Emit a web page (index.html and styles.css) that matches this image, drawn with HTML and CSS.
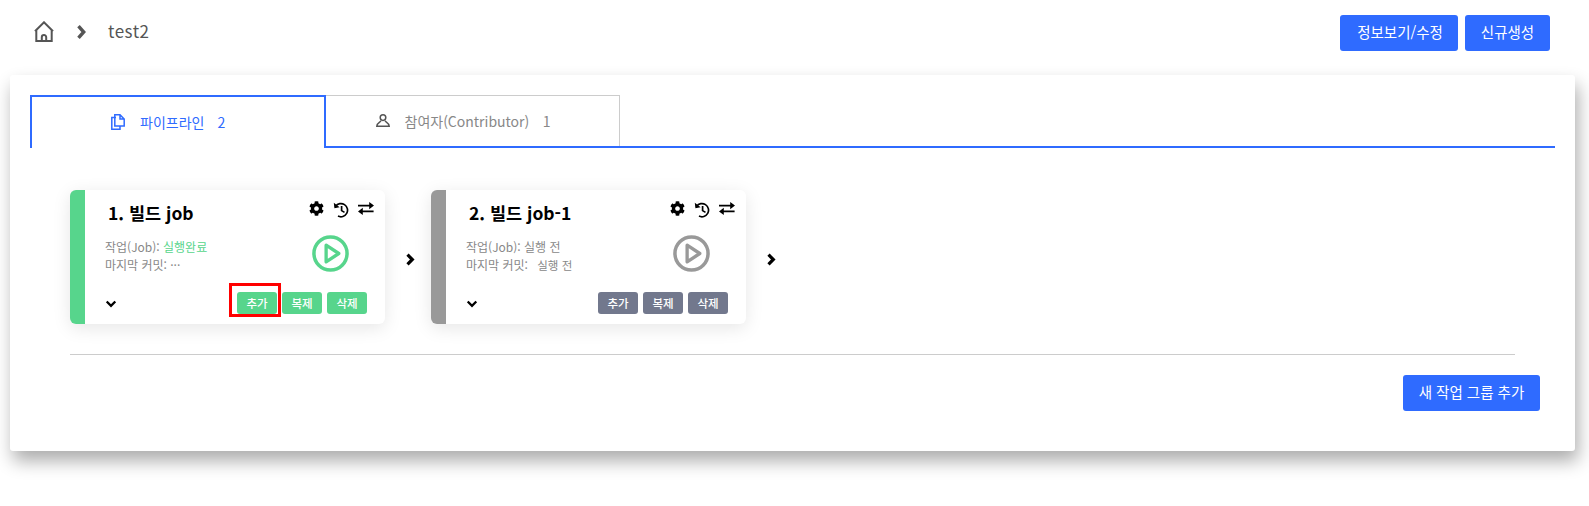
FILE: index.html
```html
<!DOCTYPE html>
<html lang="ko">
<head>
<meta charset="utf-8">
<title>test2</title>
<link rel="stylesheet" href="styles.css">
</head>
<body>
<svg class="defs" width="0" height="0">
  <symbol id="cog" viewBox="0 0 512 512"><path d="M487.4 315.7l-42.6-24.6c4.3-23.2 4.3-47 0-70.2l42.6-24.6c4.9-2.8 7.1-8.6 5.5-14-11.1-35.6-30-67.8-54.7-94.6-3.8-4.1-10-5.1-14.8-2.3L380.8 110c-17.9-15.4-38.5-27.3-60.8-35.1V25.8c0-5.6-3.9-10.5-9.4-11.7-36.7-8.2-74.3-7.8-109.2 0-5.5 1.2-9.4 6.1-9.4 11.7V75c-22.2 7.9-42.8 19.8-60.8 35.1L88.7 85.5c-4.9-2.8-11-1.9-14.8 2.3-24.7 26.7-43.6 58.9-54.7 94.6-1.7 5.4.6 11.2 5.5 14L67.3 221c-4.3 23.2-4.3 47 0 70.2l-42.6 24.6c-4.9 2.8-7.1 8.6-5.5 14 11.1 35.6 30 67.8 54.7 94.6 3.8 4.1 10 5.1 14.8 2.3l42.6-24.6c17.9 15.4 38.5 27.3 60.8 35.1v49.2c0 5.6 3.9 10.5 9.4 11.7 36.7 8.2 74.3 7.8 109.2 0 5.500-1.200 9.400-6.100 9.400-11.700v-49.200c22.200-7.900 42.800-19.800 60.800-35.100l42.600 24.600c4.900 2.800 11 1.900 14.800-2.300 24.700-26.700 43.600-58.900 54.700-94.600 1.500-5.500-.7-11.300-5.600-14.100zM256 336c-44.100 0-80-35.900-80-80s35.900-80 80-80 80 35.900 80 80-35.900 80-80 80z"/></symbol>
  <symbol id="history" viewBox="0 0 16 16"><path d="M0.800 0.800l0.600 5.400 5.200-0.900z" fill="currentColor"/><path d="M2.600 4.300A6.600 6.600 0 1 1 5 14.100" fill="none" stroke="currentColor" stroke-width="1.700"/><path d="M8.600 4v4.600l2.900 1.800" fill="none" stroke="currentColor" stroke-width="1.700"/></symbol>
  <symbol id="swap" viewBox="0 0 16 13"><path d="M0 3.600h12.500M15.600 9.400H3" fill="none" stroke="currentColor" stroke-width="1.800"/><path d="M11.200 0l4.800 3.600-4.800 3.600zM4.800 5.800L0 9.400l4.800 3.600z" fill="currentColor"/></symbol>
  <symbol id="play" viewBox="0 0 38 38"><circle cx="19" cy="19" r="17" fill="none" stroke="currentColor" stroke-width="3.600"/><path d="M14.500 10.500L27.500 19l-13 8.500z" fill="none" stroke="currentColor" stroke-width="3.400" stroke-linejoin="round"/></symbol>
  <symbol id="chev-right" viewBox="0 0 10 13"><path d="M2.500 1.700L7.300 6.500 2.500 11.300" fill="none" stroke="currentColor" stroke-width="3.200"/></symbol>
  <symbol id="chev-down" viewBox="0 0 11 8"><path d="M1.200 1.500L5.500 5.800 9.800 1.500" fill="none" stroke="currentColor" stroke-width="2.300"/></symbol>
</svg>

<header class="topbar">
  <nav class="crumbs">
    <svg class="home" viewBox="0 0 20 21"><path d="M1 10.200L10 1.300l9 8.900M2.300 8.900V20h15.400V8.900M7.800 20v-3.800a2.200 2.200 0 0 1 4.400 0V20" fill="none" stroke="currentColor" stroke-width="2"/></svg>
    <svg class="crumb-chev" viewBox="0 0 9 14"><path d="M1.500 1.200L6.700 7 1.500 12.800" fill="none" stroke="currentColor" stroke-width="3.400"/></svg>
    <span class="crumb-text">test2</span>
  </nav>
  <div class="top-actions">
    <button class="btn-primary btn-info">정보보기/수정</button>
    <button class="btn-primary btn-new">신규생성</button>
  </div>
</header>

<main class="panel">
  <div class="tabs">
    <div class="tab tab-active">
      <svg class="tab-icon" viewBox="0 0 14 16"><path d="M5 3.600H.8v11.600h8.200V12M3.800 3.600V.8h5.200l4.200 4.200v7H3.800V3.600M9 .8v4.200h4.200" fill="none" stroke="currentColor" stroke-width="1.500"/></svg>
      <span class="tab-label">파이프라인</span>
      <span class="tab-count">2</span>
    </div>
    <div class="tab tab-idle">
      <svg class="tab-icon" viewBox="0 0 14 13"><circle cx="7" cy="3.600" r="2.800" fill="none" stroke="currentColor" stroke-width="1.500"/><path d="M4.900 6.700C4.700 8.500 1 8.700.8 12.200h12.400C13 8.700 9.300 8.500 9.100 6.700" fill="none" stroke="currentColor" stroke-width="1.500"/></svg>
      <span class="tab-label">참여자(Contributor)</span>
      <span class="tab-count">1</span>
    </div>
  </div>

  <section class="group">
    <div class="jobs">
      <article class="card card-done">
        <div class="band"></div>
        <div class="card-body">
          <div class="card-top">
            <h3 class="card-title">1. 빌드 job</h3>
            <div class="tools">
              <svg class="tool tool-cog"><use href="#cog"/></svg>
              <svg class="tool tool-history"><use href="#history"/></svg>
              <svg class="tool tool-swap"><use href="#swap"/></svg>
            </div>
          </div>
          <div class="card-mid">
            <div class="info">
              <div>작업(Job): <span class="state">실행완료</span></div>
              <div>마지막 커밋: ···</div>
            </div>
            <svg class="play"><use href="#play"/></svg>
          </div>
          <div class="card-bottom">
            <svg class="expand"><use href="#chev-down"/></svg>
            <div class="actions">
              <button class="mini marked">추가</button>
              <button class="mini">복제</button>
              <button class="mini">삭제</button>
            </div>
          </div>
        </div>
      </article>
      <svg class="next"><use href="#chev-right"/></svg>

      <article class="card card-idle">
        <div class="band"></div>
        <div class="card-body">
          <div class="card-top">
            <h3 class="card-title">2. 빌드 job-1</h3>
            <div class="tools">
              <svg class="tool tool-cog"><use href="#cog"/></svg>
              <svg class="tool tool-history"><use href="#history"/></svg>
              <svg class="tool tool-swap"><use href="#swap"/></svg>
            </div>
          </div>
          <div class="card-mid">
            <div class="info">
              <div>작업(Job): 실행 전</div>
              <div>마지막 커밋: <span class="commit">실행 전</span></div>
            </div>
            <svg class="play"><use href="#play"/></svg>
          </div>
          <div class="card-bottom">
            <svg class="expand"><use href="#chev-down"/></svg>
            <div class="actions">
              <button class="mini">추가</button>
              <button class="mini">복제</button>
              <button class="mini">삭제</button>
            </div>
          </div>
        </div>
      </article>
      <svg class="next"><use href="#chev-right"/></svg>
    </div>
    <hr class="rule">
    <div class="group-foot">
      <button class="btn-primary btn-add">새 작업 그룹 추가</button>
    </div>
  </section>
</main>
</body>
</html>
```

FILE: styles.css
```css
* { box-sizing: border-box; }
html, body { margin: 0; padding: 0; }
body {
  width: 1589px;
  height: 506px;
  overflow: hidden;
  background: #fff;
  font-family: "Noto Sans CJK KR", "Noto Sans", sans-serif;
  color: #555;
}
.defs { position: absolute; }
button { font-family: inherit; border: 0; cursor: pointer; padding: 0; }

.topbar {
  height: 75px;
  padding: 15px 39px 0 34px;
  display: flex;
  justify-content: space-between;
  align-items: flex-start;
}
.crumbs { display: flex; align-items: center; height: 33px; }
.home { width: 20px; height: 21px; color: #555; }
.crumb-chev { width: 9px; height: 14px; margin-left: 23px; color: #555; }
.crumb-text { margin: 0 0 2px 22px; font-size: 17px; letter-spacing: 0.5px; color: #555; }
.top-actions { display: flex; gap: 7px; }
.btn-primary {
  height: 36px;
  padding: 0 0 3px;
  background: #2f6bff;
  color: #fff;
  border-radius: 3px;
  font-size: 14.500px;
}
.btn-info { width: 118px; padding-left: 2px; }
.btn-new { width: 85px; }

.panel {
  width: 1565px;
  height: 376px;
  margin-left: 10px;
  padding: 20px 20px 0 20px;
  background: #fff;
  border-radius: 3px;
  box-shadow: 3px 10px 18px rgba(0, 0, 0, 0.33);
}
.tabs {
  display: flex;
  height: 53px;
  border-bottom: 2px solid #2f6bff;
}
.tab {
  display: flex;
  align-items: center;
  font-size: 14px;
}
.tab-active {
  width: 296px;
  height: 53px;
  background: #fff;
  border: 2px solid #2f6bff;
  border-bottom: 0;
  color: #2f6bff;
  padding: 0 0 2px 79px;
}
.tab-idle {
  width: 294px;
  height: 51px;
  border: 1px solid #ccc;
  border-bottom: 0;
  border-left: 0;
  color: #888;
  padding: 0 0 1px 50px;
}
.tab-icon { width: 14px; height: 16px; }
.tab-active .tab-label { margin-left: 15px; }
.tab-active .tab-count { margin-left: 13px; }
.tab-idle .tab-icon { color: #555; height: 13px; }
.tab-idle .tab-label { margin-left: 14.500px; }
.tab-idle .tab-count { margin-left: 13.500px; }

.group { padding: 42px 15px 0 40px; }
.jobs { display: flex; align-items: center; height: 134px; }
.card {
  width: 315px;
  height: 134px;
  display: flex;
  background: #fff;
  border-radius: 6px;
  box-shadow: 0 4px 18px rgba(0, 0, 0, 0.1);
  overflow: hidden;
}
.band { width: 15px; flex: none; }
.card-done .band { background: #57d58c; }
.card-idle .band { background: #999; }
.card-body { flex: 1; padding: 0 18px 10px 20px; display: flex; flex-direction: column; }
.card-top {
  height: 47px;
  display: flex;
  justify-content: space-between;
  margin-right: -7px;
}
.card-title {
  margin: 9px 0 0 3px;
  font-size: 17.500px;
  line-height: 27px;
  font-weight: 700;
  color: #000;
}
.tools { display: flex; gap: 9px; padding-top: 11px; align-items: flex-start; color: #000; }
.tool-cog { width: 15px; height: 15px; fill: #000; }
.tool-history { width: 16px; height: 16px; margin-top: 1px; }
.tool-swap { width: 16px; height: 13px; margin-top: 1px; }
.card-mid { height: 55px; display: flex; justify-content: space-between; margin-right: 18px; }
.info {
  padding: 1px 0 0 0;
  font-size: 12px;
  line-height: 17.500px;
  color: #888;
}
.state { color: #57d58c; }
.commit { margin-left: 6px; font-size: 11.500px; }
.play { width: 37px; height: 37px; margin-top: -2px; }
.card-done .play { color: #57d58c; }
.card-idle .play { color: #999; }
.card-bottom { flex: 1; display: flex; justify-content: space-between; align-items: flex-end; }
.expand { width: 12px; height: 8px; margin-bottom: 6px; color: #000; }
.actions { display: flex; gap: 5px; }
.mini {
  position: relative;
  width: 40px;
  height: 22px;
  padding: 0;
  border-radius: 3px;
  font-size: 11.500px;
  font-weight: 500;
  color: #fff;
}
.card-done .mini { background: #57d58c; }
.card-idle .mini { background: #72788d; }
.marked::after {
  content: "";
  position: absolute;
  left: -8px;
  top: -9px;
  width: 52px;
  height: 34px;
  box-sizing: border-box;
  border: 3px solid #f00;
}
.next { width: 10px; height: 13px; margin: 4px 16px 0 20px; color: #000; flex: none; }

.rule {
  width: 1445px;
  height: 1px;
  margin: 30px 0 0 0;
  border: 0;
  background: #ccc;
}
.group-foot { display: flex; justify-content: flex-end; padding-top: 20px; }
.btn-add { width: 137px; }
```
